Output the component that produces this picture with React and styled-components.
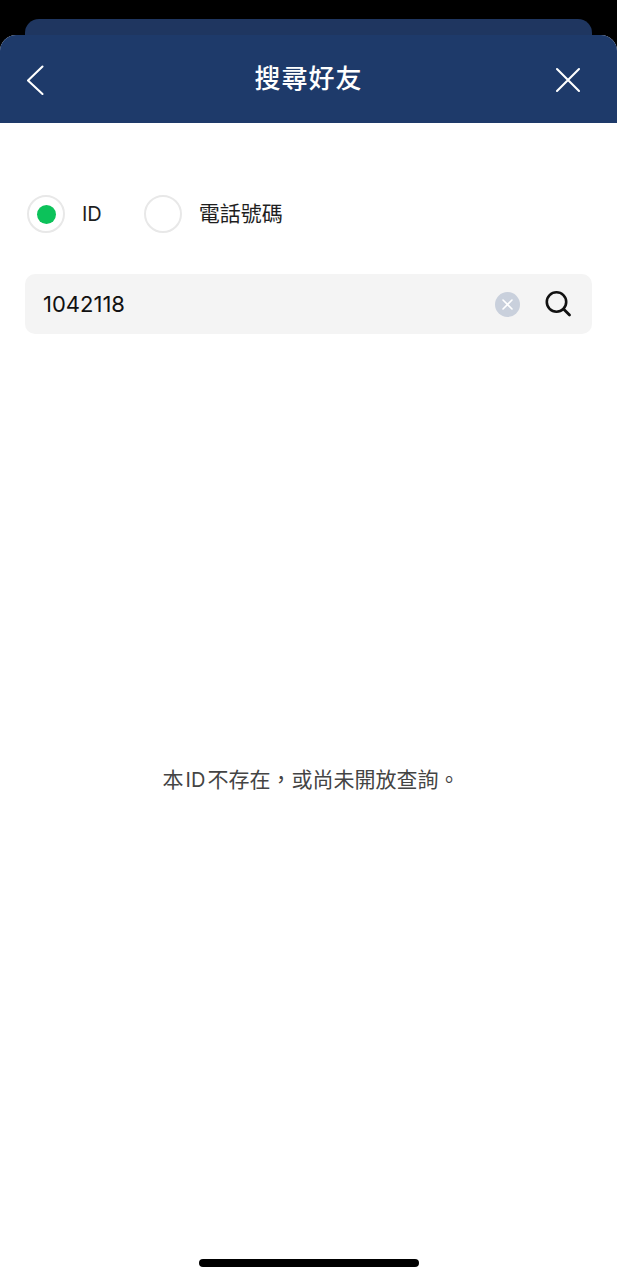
import React from "react";
import styled, { createGlobalStyle } from "styled-components";

const GlobalStyle = createGlobalStyle`
  html, body {
    margin: 0;
    padding: 0;
    background: #000;
  }
  body {
    font-family: "Inter", "Noto Sans CJK TC", sans-serif;
  }
`;

const Page = styled.div`
  width: 617px;
  height: 1280px;
  display: flex;
  flex-direction: column;
  padding-top: 19px;
  box-sizing: border-box;
  background: #000;
  overflow: hidden;
`;

const BackCard = styled.div`
  height: 16px;
  margin: 0 25px;
  background: #1f3660;
  border-radius: 14px 14px 0 0;
`;

const Sheet = styled.div`
  flex: 1;
  display: flex;
  flex-direction: column;
  background: #fff;
  border-radius: 16px 16px 0 0;
  overflow: hidden;
`;

const Header = styled.header`
  height: 88px;
  flex: none;
  display: grid;
  grid-template-columns: 1fr auto 1fr;
  align-items: center;
  padding: 0 36px;
  box-sizing: border-box;
  background: #1e3a6a;
`;

const HeaderButton = styled.button`
  width: 26px;
  height: 34px;
  padding: 0;
  margin-top: 2px;
  margin-left: ${p => p.$shift || 0}px;
  justify-self: ${p => p.$end ? "end" : "start"};
  border: 0;
  background: none;
  display: flex;
  align-items: center;
  justify-content: center;
`;

const Title = styled.h1`
  margin: 0;
  font-size: 26px;
  line-height: 34px;
  font-weight: 500;
  letter-spacing: 1px;
  color: #fff;
`;

const Content = styled.main`
  flex: 1;
  display: flex;
  flex-direction: column;
  padding: 72px 25px 0;
`;

const RadioRow = styled.div`
  display: flex;
  align-items: center;
  margin-left: 2px;
`;

const RadioOption = styled.label`
  display: flex;
  align-items: center;
  gap: 17px;
  margin-right: ${p => p.$gap || 0}px;
`;

const RadioCircle = styled.span`
  width: 38px;
  height: 38px;
  box-sizing: border-box;
  display: flex;
  align-items: center;
  justify-content: center;
  border: 2px solid #e8e8e8;
  border-radius: 50%;
  background: #fff;
`;

const RadioDot = styled.span`
  width: 19px;
  height: 19px;
  border-radius: 50%;
  background: #0cc25a;
`;

const RadioLabel = styled.span`
  font-size: ${p => p.$size || 20}px;
  line-height: 38px;
  color: #1e1e1e;
`;

const SearchBox = styled.div`
  height: 60px;
  margin-top: 41px;
  display: flex;
  align-items: center;
  padding: 0 20px 0 18px;
  box-sizing: border-box;
  background: #f4f4f4;
  border-radius: 10px;
`;

const SearchValue = styled.span`
  flex: 1;
  font-size: 22px;
  font-weight: 400;
  color: #111;
`;

const ClearButton = styled.span`
  width: 25px;
  height: 25px;
  margin-right: 24px;
  display: flex;
  align-items: center;
  justify-content: center;
  background: #c9d0dc;
  border-radius: 50%;
`;

const Message = styled.p`
  margin: 430px 0 0;
  padding-left: 5px;
  text-align: center;
  font-size: 21px;
  line-height: 32px;
  color: #444;
`;

const LatinWord = styled.span`
  margin: 0 2px;
  font-size: 20px;
`;

const HomeBar = styled.div`
  width: 220px;
  height: 8px;
  flex: none;
  margin: 0 auto 13px;
  background: #000;
  border-radius: 4px;
`;

export default function App() {
  return (
    <Page>
      <GlobalStyle />
      <BackCard />
      <Sheet>
        <Header>
          <HeaderButton aria-label="back" $shift={-14}>
            <svg width="22" height="32" viewBox="0 0 22 32" fill="none">
              <path d="M18.5 2.5 4 16.5l14.5 13.5" stroke="#fff" strokeWidth="2.1" strokeLinecap="round" strokeLinejoin="round" />
            </svg>
          </HeaderButton>
          <Title>搜尋好友</Title>
          <HeaderButton aria-label="close" $end>
            <svg width="26" height="26" viewBox="0 0 26 26" fill="none">
              <path d="M2 2l22 22M24 2 2 24" stroke="#fff" strokeWidth="2.1" strokeLinecap="round" />
            </svg>
          </HeaderButton>
        </Header>
        <Content>
          <RadioRow>
            <RadioOption $gap={42}>
              <RadioCircle>
                <RadioDot />
              </RadioCircle>
              <RadioLabel>ID</RadioLabel>
            </RadioOption>
            <RadioOption>
              <RadioCircle />
              <RadioLabel $size={21}>電話號碼</RadioLabel>
            </RadioOption>
          </RadioRow>
          <SearchBox>
            <SearchValue>1042118</SearchValue>
            <ClearButton>
              <svg width="11" height="11" viewBox="0 0 11 11" fill="none">
                <path d="M1 1l9 9M10 1l-9 9" stroke="#fff" strokeWidth="1.6" strokeLinecap="round" />
              </svg>
            </ClearButton>
            <svg width="28" height="28" viewBox="0 0 28 28" fill="none">
              <circle cx="12.5" cy="12" r="9.7" stroke="#111" strokeWidth="2.6" />
              <path d="M19.5 19l6 6" stroke="#111" strokeWidth="2.8" strokeLinecap="round" />
            </svg>
          </SearchBox>
          <Message>本<LatinWord>ID</LatinWord>不存在，或尚未開放查詢。</Message>
        </Content>
        <HomeBar />
      </Sheet>
    </Page>
  );
}
